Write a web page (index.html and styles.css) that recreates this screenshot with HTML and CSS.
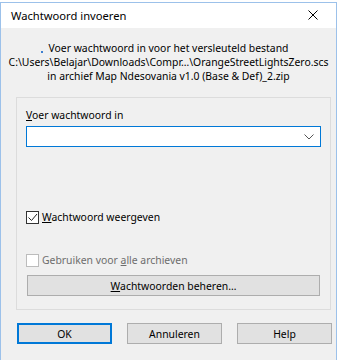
FILE: index.html
```html
<!doctype html>
<html lang="nl">

<head>
	<title>Wachtwoord invoeren</title>
	<meta charset="utf-8">
	<link rel="stylesheet" href="styles.css">
</head>

<body>
	<div class="dialog">
		<div class="titlebar">
			<span class="title">Wachtwoord invoeren</span>
			<span class="close">
				<svg width="10" height="10" viewBox="0 0 10 10">
					<path d="M0.5 0.5 L9.5 9.5 M9.5 0.5 L0.5 9.5" stroke="#000" stroke-width="1" fill="none"/>
				</svg>
			</span>
		</div>
		<div class="content">
			<div class="message">
				<span class="dot"></span>
				<p>Voer wachtwoord in voor het versleuteld bestand</p>
				<p>C:\Users\Belajar\Downloads\Compr…\OrangeStreetLightsZero.scs</p>
				<p>in archief Map Ndesovania v1.0 (Base &amp; Def)_2.zip</p>
			</div>
			<div class="group">
				<label class="label"><u>V</u>oer wachtwoord in</label>
				<div class="combo">
					<svg width="10" height="6" viewBox="0 0 10 6">
						<path d="M0.5 0.5 L5 5 L9.5 0.5" stroke="#555" stroke-width="1" fill="none"/>
					</svg>
				</div>
				<div class="check checked">
					<span class="box">
						<svg width="11" height="11" viewBox="0 0 11 11">
							<path d="M1.5 5.5 L4.5 8.5 L10 2" stroke="#222" stroke-width="1" fill="none"/>
						</svg>
					</span>
					<span><u>W</u>achtwoord weergeven</span>
				</div>
				<div class="check disabled">
					<span class="box"></span>
					<span>Gebruiken voor <u>a</u>lle archieven</span>
				</div>
				<button class="btn wide"><u>W</u>achtwoorden beheren…</button>
			</div>
			<div class="buttons">
				<button class="btn default">OK</button>
				<button class="btn">Annuleren</button>
				<button class="btn">Help</button>
			</div>
		</div>
	</div>
</body>

</html>
```

FILE: styles.css
```css
html
{
	margin: 0;
	padding: 0;
}
body
{
	margin: 0;
	padding: 0;
	background: #ffffff;
	font-family: "Noto Sans", "Liberation Sans", sans-serif;
	font-size: 10.4px;
	color: #000;
	overflow: hidden;
}

.dialog
{
	width: 335px;
	margin: 2px 0 0 0;
	border: 1px solid #9cc1ea;
	background: #f0f0f0;
}

.titlebar
{
	height: 25px;
	background: #ffffff;
	display: flex;
	align-items: center;
	justify-content: space-between;
	padding-left: 10px;
}

.title
{
	font-size: 11.2px;
}

.close
{
	width: 46px;
	height: 25px;
	display: flex;
	align-items: center;
	justify-content: center;
	margin-top: -2px;
}

.close svg
{
	display: block;
}

.content
{
	padding: 13px 0 0 0;
	height: 326px;
}

.message
{
	position: relative;
	text-align: center;
	height: 56px;
}

.message p
{
	margin: 0;
	line-height: 14px;
	white-space: nowrap;
}

.dot
{
	position: absolute;
	left: 40px;
	top: 10px;
	width: 2px;
	height: 2px;
	background: #3d7fd0;
}

.group
{
	margin: 0 0 0 15px;
	width: 304px;
	height: 211px;
	border: 1px solid #dcdcdc;
	padding: 0 0 0 9px;
	display: flex;
	flex-direction: column;
	align-items: flex-start;
}

.label
{
	display: block;
	line-height: 14px;
	margin-top: 10px;
}

.combo
{
	box-sizing: border-box;
	width: 295px;
	height: 21px;
	margin-top: 4px;
	background: #ffffff;
	border: 1px solid #0078d7;
	display: flex;
	align-items: center;
	justify-content: flex-end;
	padding-right: 6px;
}

.combo svg
{
	display: block;
}

.check
{
	display: flex;
	align-items: center;
	height: 14px;
	line-height: 14px;
}

.check.checked
{
	margin-top: 63px;
}

.check.disabled
{
	margin-top: 29px;
	color: #6d6d6d;
}

.box
{
	box-sizing: border-box;
	width: 13px;
	height: 13px;
	border: 1px solid #333333;
	background: #ffffff;
	margin-right: 3px;
	display: flex;
	align-items: center;
	justify-content: center;
}

.box svg
{
	display: block;
}

.disabled .box
{
	border-color: #bcbcbc;
}

.btn
{
	box-sizing: border-box;
	height: 21px;
	width: 95px;
	padding: 0;
	margin: 0;
	background: #e1e1e1;
	border: 1px solid #adadad;
	font-family: inherit;
	font-size: 10.4px;
	color: #000;
	line-height: 18px;
}

.btn.wide
{
	width: 293px;
	margin-top: 8px;
	margin-left: 1px;
}

.btn.default
{
	border: 2px solid #0078d7;
}

.buttons
{
	display: flex;
	gap: 15px;
	margin: 13px 0 0 16px;
}
```
